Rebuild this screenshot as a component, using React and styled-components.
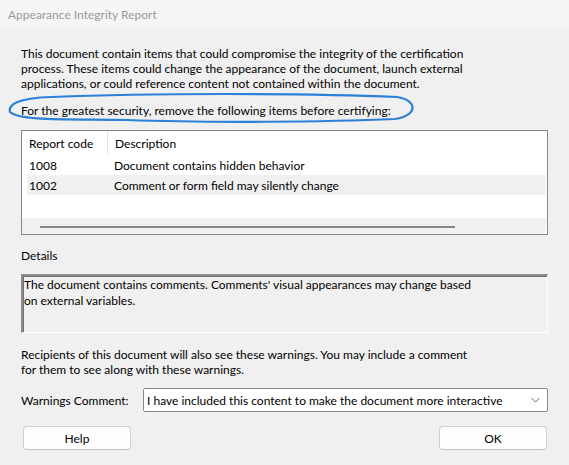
import styled, { createGlobalStyle } from "styled-components";

const GlobalStyle = createGlobalStyle`
  html, body {
    margin: 0;
    padding: 0;
    background: #f0f0f0;
  }
  body {
    font-family: "Lato", "Noto Sans", sans-serif;
    font-size: 12px;
    color: #000;
  }
`;

const REPORT_ITEMS = [
  { code: "1008", description: "Document contains hidden behavior", selected: false },
  { code: "1002", description: "Comment or form field may silently change", selected: true },
];

const ChevronIcon = () => (
  <svg width="9" height="6" viewBox="0 0 9 6">
    <polyline points="0.5,1 4.5,5 8.5,1" fill="none" stroke="#6a6a6a" strokeWidth="1" />
  </svg>
);

// hand-drawn marker round the key sentence
const Ellipse = () => (
  <StyledEllipse width="416" height="34" viewBox="0 0 416 34">
    <path
      d="M 45 6 C 140 2, 300 2, 390 6 C 410 9, 412 24, 388 28 C 320 31, 200 32, 120 29 C 60 28, 12 30, 3 21 C 1 14, 10 7, 44 6"
      fill="none"
      stroke="#2b80d8"
      strokeWidth="2.2"
      strokeLinecap="round"
    />
  </StyledEllipse>
);

const App = () => {
  return (
    <StyledWindow>
      <GlobalStyle />
      <StyledTitleBar>Appearance Integrity Report</StyledTitleBar>
      <StyledBody>
        <StyledText>
          This document contain items that could compromise the integrity of the certification
          <br />
          process. These items could change the appearance of the document, launch external
          <br />
          applications, or could reference content not contained within the document.
        </StyledText>

        <StyledCallout>
          For the greatest security, remove the following items before certifying:
          <Ellipse />
        </StyledCallout>

        <StyledTable>
          <StyledHeaderRow>
            <StyledCodeCell>Report code</StyledCodeCell>
            <StyledHeaderDivider />
            <StyledDescCell>Description</StyledDescCell>
          </StyledHeaderRow>
          {REPORT_ITEMS.map((item) => (
            <StyledRow key={item.code} $selected={item.selected}>
              <StyledCodeCell>{item.code}</StyledCodeCell>
              <StyledDescCell>{item.description}</StyledDescCell>
            </StyledRow>
          ))}
          <StyledFiller />
          <StyledScrollBar>
            <StyledThumb />
          </StyledScrollBar>
        </StyledTable>

        <StyledLabel>Details</StyledLabel>
        <StyledDetails>
          The document contains comments. Comments' visual appearances may change based
          <br />
          on external variables.
        </StyledDetails>

        <StyledRecipients>
          Recipients of this document will also see these warnings. You may include a comment
          <br />
          for them to see along with these warnings.
        </StyledRecipients>

        <StyledCommentRow>
          <StyledCommentLabel>Warnings Comment:</StyledCommentLabel>
          <StyledSelect>
            <span>I have included this content to make the document more interactive</span>
            <ChevronIcon />
          </StyledSelect>
        </StyledCommentRow>

        <StyledButtonRow>
          <StyledButton>Help</StyledButton>
          <StyledButton>OK</StyledButton>
        </StyledButtonRow>
      </StyledBody>
    </StyledWindow>
  );
};

export default App;

const StyledWindow = styled.div`
  width: 569px;
  height: 465px;
  background: #f0f0f0;
  display: flex;
  flex-direction: column;
  overflow: hidden;
`;

const StyledTitleBar = styled.div`
  height: 28px;
  flex-shrink: 0;
  display: flex;
  align-items: center;
  padding-left: 8px;
  background: #f5f5f5;
  color: #9a9a9a;
  font-size: 12px;
`;

const StyledBody = styled.div`
  display: flex;
  flex-direction: column;
  padding: 18px 21px 0 21px;
`;

const StyledText = styled.p`
  margin: 0;
  line-height: 15px;
  white-space: nowrap;
`;

const StyledCallout = styled(StyledText)`
  position: relative;
  margin-top: 12px;
`;

const StyledEllipse = styled.svg`
  position: absolute;
  left: -14px;
  top: -12px;
  pointer-events: none;
`;

const StyledTable = styled.div`
  margin-top: 12px;
  height: 105px;
  box-sizing: border-box;
  border: 1px solid #82868e;
  background: #fff;
  display: flex;
  flex-direction: column;
`;

const StyledHeaderRow = styled.div`
  height: 24px;
  flex-shrink: 0;
  display: flex;
  align-items: center;
  padding-left: 5px;
`;

const StyledHeaderDivider = styled.div`
  width: 1px;
  height: 24px;
  background: #e5e5e5;
`;

const StyledRow = styled.div`
  height: 20px;
  flex-shrink: 0;
  display: flex;
  align-items: center;
  margin: 0 1px 0 5px;
  background: ${(props) => (props.$selected ? "#f0f0f0" : "transparent")};
`;

const StyledCodeCell = styled.div`
  width: 78px;
  padding-left: 2px;
  white-space: nowrap;
`;

const StyledDescCell = styled.div`
  padding-left: 7px;
  white-space: nowrap;
`;

const StyledFiller = styled.div`
  flex: 1;
`;

const StyledScrollBar = styled.div`
  height: 16px;
  flex-shrink: 0;
  background: #f0f0f0;
  margin-right: 1px;
  display: flex;
  align-items: center;
  padding-left: 18px;
`;

const StyledThumb = styled.div`
  width: 415px;
  height: 2px;
  margin-top: 1px;
  background: #868686;
`;

const StyledLabel = styled.div`
  margin-top: 13px;
  line-height: 15px;
`;

const StyledDetails = styled.div`
  margin-top: 11px;
  height: 59px;
  box-sizing: border-box;
  padding: 1px 0 0 1px;
  line-height: 16px;
  white-space: nowrap;
  border-style: solid;
  border-width: 2px 1px 1px 2px;
  border-color: #8c8c8c #fdfdfd #fdfdfd #8c8c8c;
  box-shadow: inset 1px 1px 0 #6e6e6e;
  background: #f0f0f0;
`;

const StyledRecipients = styled(StyledText)`
  margin-top: 14px;
`;

const StyledCommentRow = styled.div`
  margin-top: 11px;
  display: flex;
  align-items: center;
`;

const StyledCommentLabel = styled.div`
  width: 122px;
  white-space: nowrap;
`;

const StyledSelect = styled.div`
  flex: 1;
  height: 24px;
  box-sizing: border-box;
  border: 1px solid #8a8a8a;
  border-radius: 2px;
  background: #fff;
  display: flex;
  align-items: center;
  justify-content: space-between;
  padding: 0 7px 0 3px;
  white-space: nowrap;
`;

const StyledButtonRow = styled.div`
  margin-top: 14px;
  display: flex;
  justify-content: space-between;
  padding: 0 1px 0 2px;
`;

const StyledButton = styled.button`
  width: 108px;
  height: 24px;
  box-sizing: border-box;
  font-family: inherit;
  font-size: 12px;
  color: #000;
  background: #fdfdfd;
  border: 1px solid #d0d0d0;
  border-bottom-color: #c2c2c2;
  border-radius: 4px;
  cursor: pointer;
  &:hover {
    background: #f6f6f6;
  }
`;
